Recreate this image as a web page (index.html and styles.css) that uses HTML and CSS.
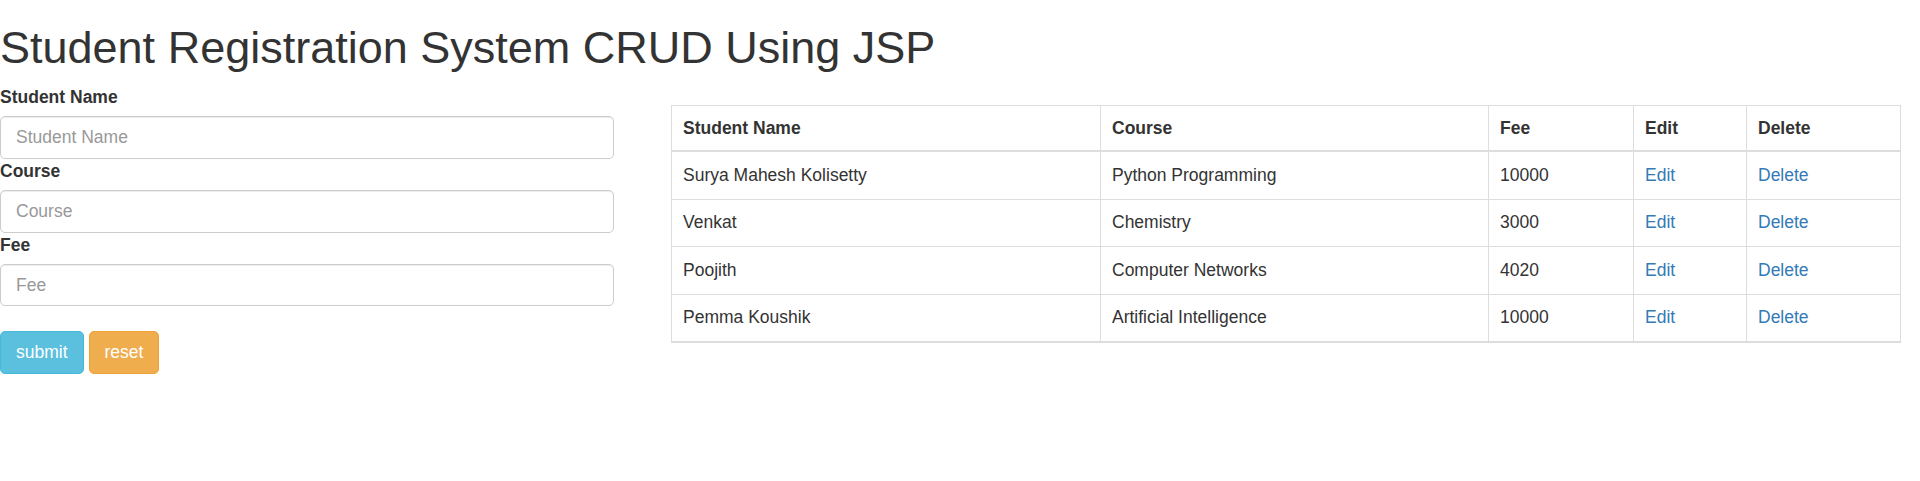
FILE: index.html
```html
<!DOCTYPE html>
<html lang="en">
<head>
<meta charset="utf-8">
<title>Student Registration System CRUD Using JSP</title>
<link rel="stylesheet" href="styles.css">
</head>
<body>
<h1 class="title">Student Registration System CRUD Using JSP</h1>
<div class="layout">
  <form class="reg-form">
    <label class="field-label" for="sname">Student Name</label>
    <input class="field-input" id="sname" type="text" placeholder="Student Name">
    <label class="field-label" for="course">Course</label>
    <input class="field-input" id="course" type="text" placeholder="Course">
    <label class="field-label" for="fee">Fee</label>
    <input class="field-input" id="fee" type="text" placeholder="Fee">
    <div class="actions">
      <button type="button" class="btn btn-info">submit</button>
      <button type="reset" class="btn btn-warning">reset</button>
    </div>
  </form>
  <div class="table-col">
    <table class="data-table">
      <colgroup>
        <col class="c-name">
        <col class="c-course">
        <col class="c-fee">
        <col class="c-edit">
        <col class="c-delete">
      </colgroup>
      <thead>
        <tr><th>Student Name</th><th>Course</th><th>Fee</th><th>Edit</th><th>Delete</th></tr>
      </thead>
      <tbody>
        <tr><td>Surya Mahesh Kolisetty</td><td>Python Programming</td><td>10000</td><td><a href="#">Edit</a></td><td><a href="#">Delete</a></td></tr>
        <tr><td>Venkat</td><td>Chemistry</td><td>3000</td><td><a href="#">Edit</a></td><td><a href="#">Delete</a></td></tr>
        <tr><td>Poojith</td><td>Computer Networks</td><td>4020</td><td><a href="#">Edit</a></td><td><a href="#">Delete</a></td></tr>
        <tr><td>Pemma Koushik</td><td>Artificial Intelligence</td><td>10000</td><td><a href="#">Edit</a></td><td><a href="#">Delete</a></td></tr>
      </tbody>
    </table>
  </div>
</div>
</body>
</html>
```
FILE: styles.css
```css
* { box-sizing: border-box; }
html, body { margin: 0; padding: 0; background: #fff; }
body {
  font-family: "Liberation Sans", Arial, Helvetica, sans-serif;
  font-size: 17.5px;
  line-height: 25px;
  color: #333;
}
.title {
  margin: 23px 0 12.5px;
  font-size: 45px;
  line-height: 49.5px;
  font-weight: 400;
  color: #333;
}
.layout {
  display: grid;
  grid-template-columns: 614px 1229px;
  column-gap: 57px;
  align-items: start;
}
.reg-form { display: flex; flex-direction: column; margin: 0; }
.field-label {
  display: block;
  font-weight: 700;
  line-height: 25px;
  margin-bottom: 6.25px;
}
.field-input {
  display: block;
  width: 100%;
  height: 42.5px;
  padding: 7.5px 15px;
  font-family: inherit;
  font-size: 17.5px;
  line-height: 25px;
  color: #555;
  background: #fff;
  border: 1px solid #ccc;
  border-radius: 5px;
  box-shadow: inset 0 1px 1px rgba(0,0,0,.075);
}
.field-input::placeholder { color: #999; }
.actions { display: flex; gap: 5px; margin-top: 25px; }
.btn {
  height: 42.5px;
  padding: 7.5px 15px;
  font-family: inherit;
  font-size: 17.5px;
  line-height: 25px;
  color: #fff;
  border: 1px solid transparent;
  border-radius: 5px;
  cursor: pointer;
}
.btn-info { background: #5bc0de; border-color: #46b8da; }
.btn-warning { background: #f0ad4e; border-color: #eea236; }
.table-col { padding-top: 19.5px; }
.data-table {
  width: 100%;
  table-layout: fixed;
  border-collapse: collapse;
  border: 1px solid #ddd;
  border-bottom: 2px solid #ddd;
}
.c-name { width: 429px; }
.c-course { width: 388px; }
.c-fee { width: 145px; }
.c-edit { width: 113px; }
.c-delete { width: 154px; }
.data-table th, .data-table td {
  text-align: left;
  padding: 10.75px 10px 10.75px 11px;
  line-height: 25px;
  border: 1px solid #ddd;
  vertical-align: top;
  white-space: nowrap;
}
.data-table tbody tr:last-child td { border-bottom: 2px solid #ddd; }
.data-table th { font-weight: 700; vertical-align: bottom; border-bottom: 2.5px solid #ddd; padding-top: 10px; padding-bottom: 9.5px; }
.data-table a { color: #337ab7; text-decoration: none; }
```
